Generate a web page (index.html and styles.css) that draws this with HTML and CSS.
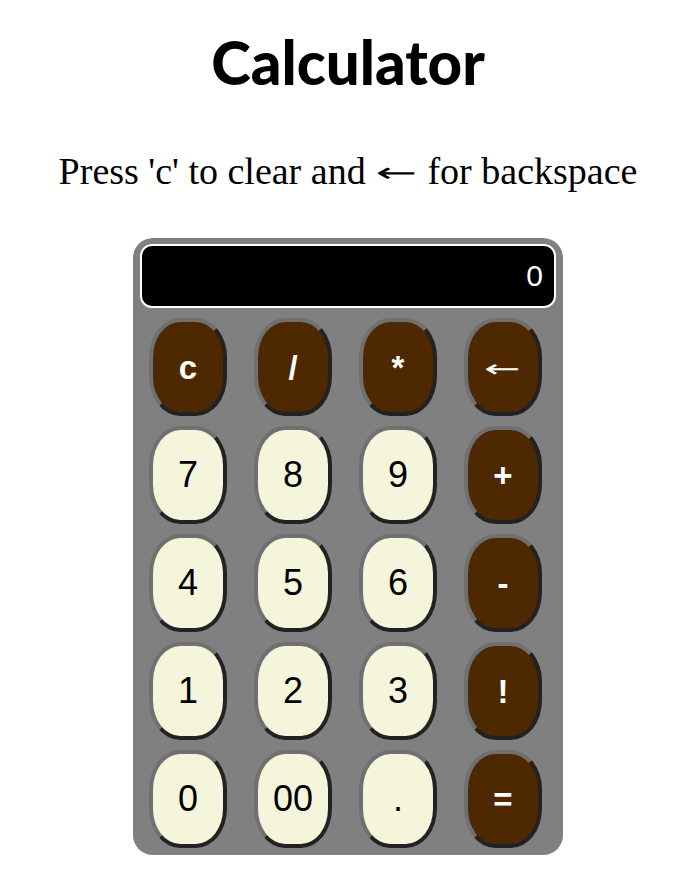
FILE: index.html
```html
<!DOCTYPE html>
<html lang="en">
<head>
<meta charset="utf-8">
<title>Calculator</title>
<link rel="stylesheet" href="styles.css">
</head>
<body>
<h1 class="title">Calculator</h1>
<p class="hint">Press 'c' to clear and <span class="hint-arrow">←</span> for backspace</p>
<div class="calc">
  <div class="display">0</div>
  <div class="keys">
    <button class="key op">c</button>
    <button class="key op">/</button>
    <button class="key op">*</button>
    <button class="key op arrow"><span class="arrow-glyph">←</span></button>
    <button class="key num">7</button>
    <button class="key num">8</button>
    <button class="key num">9</button>
    <button class="key op">+</button>
    <button class="key num">4</button>
    <button class="key num">5</button>
    <button class="key num">6</button>
    <button class="key op">-</button>
    <button class="key num">1</button>
    <button class="key num">2</button>
    <button class="key num">3</button>
    <button class="key op">!</button>
    <button class="key num">0</button>
    <button class="key num">00</button>
    <button class="key num">.</button>
    <button class="key op">=</button>
  </div>
</div>
</body>
</html>
```
FILE: styles.css
```css
body {
  margin: 0;
  padding: 26px 0 0 8px;
  background: #ffffff;
}

.title {
  margin: 0;
  text-align: center;
  font-family: "Comic Sans MS", Lato, "DejaVu Sans", sans-serif;
  font-weight: 900;
  font-size: 60px;
  line-height: 72px;
  color: #000;
}

.hint {
  height: 42px;
  margin: 52px 0 0;
  text-align: center;
  font-family: "Liberation Serif", "Times New Roman", serif;
  font-size: 38px;
  line-height: 42px;
  color: #000;
}

.hint-arrow {
  display: inline-block;
  font-family: "DejaVu Sans", sans-serif;
  font-size: 32px;
  line-height: 1;
  transform: scaleX(1.55) scaleY(0.85);
  margin: 0 8px;
}

.calc {
  width: 430px;
  box-sizing: border-box;
  margin: 46px auto 0;
  padding: 6px 7px 7px;
  background: #808080;
  border-radius: 20px;
}

.display {
  height: 64px;
  box-sizing: border-box;
  border: 2px solid #ffffff;
  border-radius: 12px;
  background: #000;
  color: #fff;
  font-family: "Liberation Sans", Arial, sans-serif;
  font-size: 30px;
  line-height: 60px;
  text-align: right;
  padding-right: 11px;
}

.keys {
  display: grid;
  grid-template-columns: repeat(4, 78px);
  grid-auto-rows: 98px;
  justify-content: space-between;
  row-gap: 10px;
  margin-top: 10px;
  padding: 0 14px 0 9px;
}

.key {
  width: 78px;
  height: 98px;
  box-sizing: border-box;
  margin: 0;
  padding: 0;
  border: 4px solid;
  border-color: #707070 #222222 #222222 #707070;
  border-radius: 40%;
  font-family: "Liberation Sans", Arial, sans-serif;
  font-size: 35px;
  line-height: 1;
  cursor: pointer;
}

.op {
  background: #4d2800;
  color: #ffffff;
  font-weight: bold;
  font-size: 33px;
}

.op.arrow {
  font-weight: normal;
}

.arrow-glyph {
  display: inline-block;
  font-family: "DejaVu Sans", sans-serif;
  font-size: 30px;
  transform: scaleX(1.45) scaleY(0.8);
}

.num {
  background: #f5f5dc;
  color: #000000;
  font-size: 36px;
}
```
